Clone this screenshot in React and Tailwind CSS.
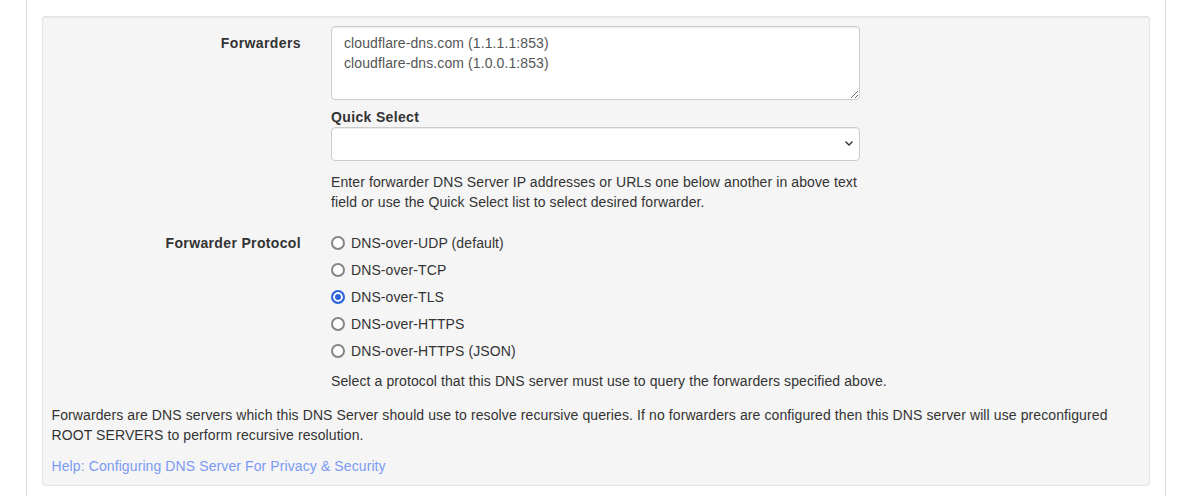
import { useState } from 'react';

const PROTOCOLS = [
  { id: 'udp', label: 'DNS-over-UDP (default)' },
  { id: 'tcp', label: 'DNS-over-TCP' },
  { id: 'tls', label: 'DNS-over-TLS' },
  { id: 'https', label: 'DNS-over-HTTPS' },
  { id: 'https-json', label: 'DNS-over-HTTPS (JSON)' },
];

function App() {
  const [protocol, setProtocol] = useState('tls');
  const [forwarders, setForwarders] = useState(
    'cloudflare-dns.com (1.1.1.1:853)\ncloudflare-dns.com (1.0.0.1:853)'
  );

  return (
    <div
      className="min-h-[496px] bg-white text-[14px] leading-[20px] tracking-[0.1px] text-[#333]"
      style={{ fontFamily: '"Liberation Sans", Arial, sans-serif' }}
    >
      <div className="mx-auto w-[1140px]">
        <div className="border-x border-[#ddd] px-[15px] pt-[16px] pb-[15px]">
          {/* well */}
          <div className="rounded-[3px] border border-[#e3e3e3] bg-[#f5f5f5] p-[9px] shadow-[inset_0_1px_1px_rgba(0,0,0,0.05)]">
            {/* Forwarders */}
            <div className="-mx-[15px] flex">
              <label className="w-1/4 shrink-0 px-[15px] pt-[7px] text-right font-bold tracking-[0.4px]">
                Forwarders
              </label>
              <div className="w-1/2 shrink-0 px-[15px]">
                <textarea
                  rows={3}
                  value={forwarders}
                  onChange={(e) => setForwarders(e.target.value)}
                  className="block h-[74px] w-full rounded-[4px] border border-[#ccc] bg-white px-[12px] py-[6px] text-[14px] leading-[20px] tracking-[0.1px] text-[#555] shadow-[inset_0_1px_1px_rgba(0,0,0,0.075)] outline-none"
                />
                <div className="mt-[7px] font-bold tracking-[0.35px]">Quick Select</div>
                <div className="relative">
                  <select className="block h-[34px] w-full appearance-none rounded-[4px] border border-[#ccc] bg-white px-[12px] text-[#555] shadow-[inset_0_1px_1px_rgba(0,0,0,0.075)] outline-none">
                    <option value=""></option>
                    <option>Cloudflare (DNS-over-TLS)</option>
                    <option>Google (DNS-over-TLS)</option>
                    <option>Quad9 (DNS-over-TLS)</option>
                  </select>
                  <svg
                    className="pointer-events-none absolute right-[6px] top-[13px]"
                    width="10"
                    height="7"
                    viewBox="0 0 10 7"
                    fill="none"
                  >
                    <path d="M1.5 1.5 L5 5 L8.5 1.5" stroke="#333" strokeWidth="1.4" />
                  </svg>
                </div>
                <p className="mt-[11px]">
                  Enter forwarder DNS Server IP addresses or URLs one below another in above text field or use the Quick
                  Select list to select desired forwarder.
                </p>
              </div>
            </div>

            {/* Forwarder Protocol */}
            <div className="-mx-[15px] mt-[14px] flex">
              <label className="w-1/4 shrink-0 px-[15px] pt-[7px] text-right font-bold tracking-[0.35px]">
                Forwarder Protocol
              </label>
              <div className="w-2/3 shrink-0 px-[15px]">
                {PROTOCOLS.map((p) => (
                  <label key={p.id} className="flex h-[27px] items-end gap-[6px]">
                    <input
                      type="radio"
                      name="forwarderProtocol"
                      checked={protocol === p.id}
                      onChange={() => setProtocol(p.id)}
                      className="m-0 mb-[3px] h-[14px] w-[14px] shrink-0 appearance-none rounded-full border-2 border-[#858585] bg-white checked:border-[#2b63d9] checked:bg-[#2b63d9] checked:shadow-[inset_0_0_0_2px_#fff]"
                    />
                    <span className="leading-[20px]">{p.label}</span>
                  </label>
                ))}
                <p className="mt-[10px]">
                  Select a protocol that this DNS server must use to query the forwarders specified above.
                </p>
              </div>
            </div>

            <p className="mt-[14px]">
              Forwarders are DNS servers which this DNS Server should use to resolve recursive queries. If no forwarders
              are configured then this DNS server will use preconfigured ROOT SERVERS to perform recursive resolution.
            </p>
            <a href="#help" className="mt-[11px] block w-fit text-[#7b9af4]">
              Help: Configuring DNS Server For Privacy &amp; Security
            </a>
          </div>
        </div>
      </div>
    </div>
  );
}

export default App;
